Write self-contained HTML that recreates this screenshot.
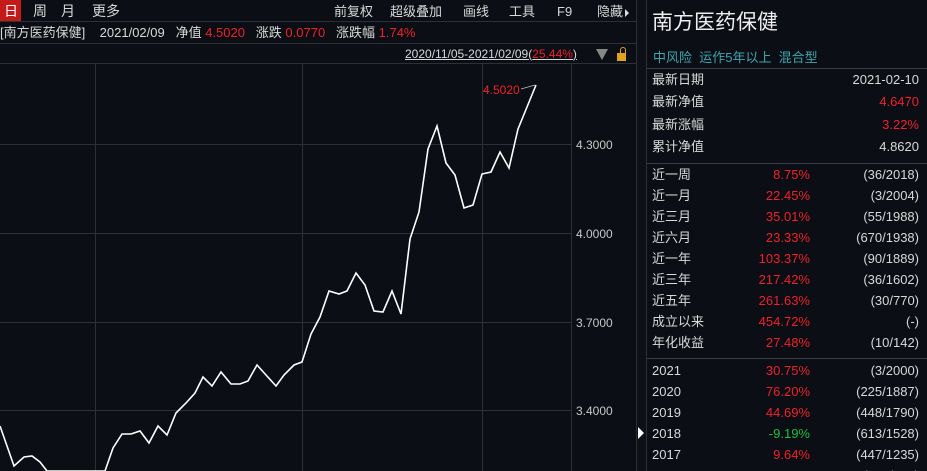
<!DOCTYPE html>
<html style="overflow:hidden;height:471px"><head><meta charset="utf-8"><style>
*{margin:0;padding:0;box-sizing:border-box}
html,body{width:927px;height:471px;overflow:hidden}
body{background:#0b0e14;position:relative;font-family:"Liberation Sans","Noto Sans CJK SC",sans-serif;color:#d8d8d8;font-size:13px}
.a{position:absolute;white-space:nowrap;line-height:16px}
.r{color:#f0202a}.g{color:#18c040}
.hl{position:absolute;left:0;width:636px;height:1px;background:#2e3038}
</style></head><body>
<div class="a" style="left:0;top:0;width:21px;height:21px;background:#c41a1a"></div>
<div class="a" style="left:4px;top:3px;font-size:14px;color:#fff">日</div>
<div class="a" style="left:33px;top:3px;font-size:14px">周</div>
<div class="a" style="left:61px;top:3px;font-size:14px">月</div>
<div class="a" style="left:92px;top:3px;font-size:14px">更多</div>
<div class="a" style="left:334px;top:4px;font-size:13px">前复权</div>
<div class="a" style="left:390px;top:4px;font-size:13px">超级叠加</div>
<div class="a" style="left:463px;top:4px;font-size:13px">画线</div>
<div class="a" style="left:509px;top:4px;font-size:13px">工具</div>
<div class="a" style="left:557px;top:4px;font-size:13px">F9</div>
<div class="a" style="left:597px;top:4px;font-size:13px">隐藏</div>
<div class="a" style="left:625px;top:9px;width:0;height:0;border-left:4px solid #ddd;border-top:4px solid transparent;border-bottom:4px solid transparent"></div>
<div class="hl" style="top:21px"></div>
<div class="a" style="left:0;top:25px;font-size:13px">[南方医药保健]&nbsp;&nbsp;&nbsp;&nbsp;2021/02/09&nbsp;&nbsp;&nbsp;净值 <span class="r">4.5020</span>&nbsp;&nbsp;&nbsp;涨跌 <span class="r">0.0770</span>&nbsp;&nbsp;&nbsp;涨跌幅 <span class="r">1.74%</span></div>
<div class="hl" style="top:43px"></div>
<div class="a" style="left:405px;top:46px;font-size:12px;text-decoration:underline">2020/11/05-2021/02/09(<span class="r">25.44%</span>)</div>
<div class="a" style="left:596px;top:49px;width:0;height:0;border-top:11px solid #888;border-left:6px solid transparent;border-right:6px solid transparent"></div>
<div class="a" style="left:617px;top:53px;width:9px;height:8px;background:#e0a020"></div>
<div class="a" style="left:620px;top:47px;width:6px;height:7px;border:1.5px solid #e0a020;border-bottom:none;border-radius:3px 3px 0 0"></div>
<div class="hl" style="top:63px"></div>
<svg class="a" style="left:0;top:0" width="636" height="471">
<g stroke="#2e3038" stroke-width="1">
<line x1="95.5" y1="64" x2="95.5" y2="471"/><line x1="302.5" y1="64" x2="302.5" y2="471"/><line x1="482.5" y1="64" x2="482.5" y2="471"/><line x1="571.5" y1="64" x2="571.5" y2="471"/>
<line x1="0" y1="144.5" x2="571" y2="144.5"/><line x1="0" y1="233.5" x2="571" y2="233.5"/><line x1="0" y1="322.5" x2="571" y2="322.5"/><line x1="0" y1="410.5" x2="571" y2="410.5"/>
</g>
<polyline fill="none" stroke="#fff" stroke-width="1.6" points="0,426 14,466 24,457 32,456 40,462 47,471 105,471 113,448 122,434 131,434 140,431 149,443 158,426 167,435 176,413 186,403 195,393 203,377 212,386 221,372 231,384 240,384 248,381 257,365 266,375 276,386 284,375 294,365 302,362 311,334 320,317 329,291 339,294 347,291 356,273 365,285 374,311 383,312 392,291 401,314 410,239 419,212 428,149 437,126 446,163 455,175 464,208 473,205 482,174 491,172 500,152 509,168 518,129 527,107 536,85"/>
<line x1="521" y1="89" x2="535" y2="85" stroke="#bbb" stroke-width="0.8"/>
<g fill="#c8c8c8" font-size="12" font-family="Liberation Sans,sans-serif">
<text x="576" y="149">4.3000</text><text x="576" y="238">4.0000</text><text x="576" y="327">3.7000</text><text x="576" y="415">3.4000</text></g>
<text x="483" y="94" fill="#f0202a" font-size="12" font-family="Liberation Sans,sans-serif">4.5020</text>
</svg>
<div class="a" style="left:636px;top:0;width:11px;height:471px;background:#0e1016;border-left:1px solid #2e3038;border-right:1px solid #2e3038"></div>
<div class="a" style="left:638px;top:427px;width:0;height:0;border-left:6px solid #fff;border-top:6px solid transparent;border-bottom:6px solid transparent"></div>
<div class="a" style="left:652px;top:10px;font-size:21px;line-height:26px;color:#eee">南方医药保健</div>
<div class="a" style="left:653px;top:50px;font-size:13px;color:#3aa6b0">中风险&nbsp;&nbsp;运作5年以上&nbsp;&nbsp;混合型</div>
<div class="a" style="left:647px;top:68px;width:280px;height:1px;background:#3a3c44"></div>
<div class="a" style="left:647px;top:163px;width:280px;height:1px;background:#3a3c44"></div>
<div class="a" style="left:647px;top:358px;width:280px;height:1px;background:#3a3c44"></div>
<div id="p"></div>
<script>
var rows=[[72,"最新日期","","2021-02-10",""],[94,"最新净值","","4.6470","r"],[117,"最新涨幅","","3.22%","r"],[139,"累计净值","","4.8620",""],
[167,"近一周","8.75%","(36/2018)","r"],[188,"近一月","22.45%","(3/2004)","r"],[209,"近三月","35.01%","(55/1988)","r"],[230,"近六月","23.33%","(670/1938)","r"],[251,"近一年","103.37%","(90/1889)","r"],[272,"近三年","217.42%","(36/1602)","r"],[293,"近五年","261.63%","(30/770)","r"],[314,"成立以来","454.72%","(-)","r"],[335,"年化收益","27.48%","(10/142)","r"],
[363,"2021","30.75%","(3/2000)","r"],[384,"2020","76.20%","(225/1887)","r"],[405,"2019","44.69%","(448/1790)","r"],[426,"2018","-9.19%","(613/1528)","g"],[447,"2017","9.64%","(447/1235)","r"],[468,"2016","-7.10%","(432/716)","g"]];
var h="";rows.forEach(function(r){
h+='<div class="a" style="left:652px;top:'+r[0]+'px;font-size:13px">'+r[1]+'</div>';
if(r[2])h+='<div class="a '+r[4]+'" style="right:117px;top:'+r[0]+'px;font-size:13px">'+r[2]+'</div>';
h+='<div class="a '+(r[2]?'':r[4])+'" style="right:8px;top:'+r[0]+'px;font-size:13px">'+r[3]+'</div>';});
document.getElementById("p").innerHTML=h;
</script>
</body></html>
